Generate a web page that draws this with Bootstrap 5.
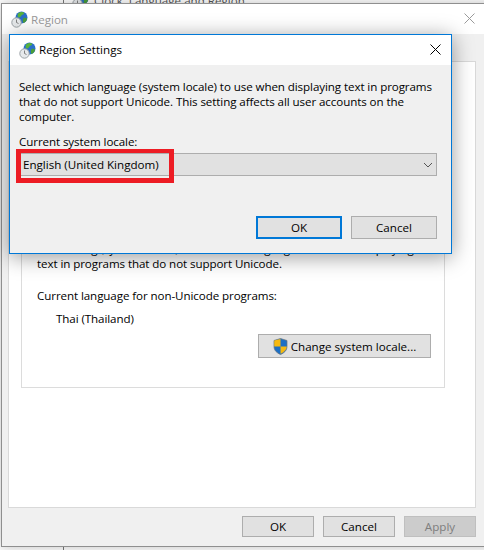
<!DOCTYPE html>
<html lang="en">
<head>
<meta charset="utf-8">
<title>Region Settings</title>
<link href="https://cdn.jsdelivr.net/npm/bootstrap@5.3.0/dist/css/bootstrap.min.css" rel="stylesheet">
<style>
html,body{height:100%;}
body{margin:0;background:#fff;overflow:hidden;position:relative;width:484px;height:550px;font-family:"Open Sans","Noto Sans",sans-serif;font-size:11.6px;line-height:15px;color:#000;}
.win-back{position:absolute;left:63px;top:-10px;width:440px;height:570px;background:#fff;border:1px solid #7a7a7a;}
.win-back-title{padding:1px 0 0 8px;color:#555;line-height:15px;white-space:nowrap;gap:5px;}
.win-region{position:absolute;left:1px;top:3px;width:500px;height:544px;background:#f0f0f0;border:1px solid #8f8f8f;box-shadow:0 0 12px rgba(0,0,0,.25);}
.win-title{height:30px;background:#fff;padding-left:9px;gap:3px;}
.win-title-text{color:#9a9a9a;}
.tab-panel{width:468px;height:447px;margin:27px 0 0 6px;background:#fff;border:1px solid #d9d9d9;padding:0 0 0 12px;}
.group-box{width:424px;height:326px;border:1px solid #dcdcdc;border-top:0;margin-top:0;padding:179px 13px 0 15px;letter-spacing:-.09px;}
.back-current{margin-top:17px;}
.back-thai{margin:8px 0 0 19px;}
.footer-row{width:468px;margin:8px 0 0 6px;gap:9px;}
.win-btn{border-radius:0;background:#e1e1e1;border:1px solid #adadad;color:#000;font-size:11.6px;line-height:15px;padding:0;height:21px;}
.win-btn:hover{background:#e1e1e1;color:#000;border-color:#adadad;}
.footer-btn{width:72px;}
.footer-first{margin-left:234px;}
.win-btn-off,.win-btn-off:disabled{background:#cccccc;border-color:#bfbfbf;color:#7d7d7d;opacity:1;}
.locale-btn{width:173px;height:24px;margin:8px 0 0 221px;gap:3px;white-space:nowrap;letter-spacing:0;}
.dlg{position:absolute;left:9px;top:34px;width:443px;height:220px;background:#f0f0f0;border:1px solid #0078d7;box-shadow:0 3px 20px rgba(0,0,0,.4);}
.dlg-title{height:30px;background:#fff;padding:0 10px 0 9px;gap:3px;}
.dlg-title-text{margin-top:-1px;}
.dlg-body{padding:14px 14px 0 9px;}
.dlg-msg{margin:0;letter-spacing:-.09px;white-space:nowrap;}
.dlg-label{display:block;margin:10px 0 0;letter-spacing:-.09px;}
.locale-select{border-radius:0;background-color:#e1e1e1;border:1px solid #adadad;color:#000;font-size:11.6px;line-height:15px;height:23px;padding:0 20px 0 3px;margin-top:4px;width:418px;background-image:url("data:image/svg+xml,%3csvg xmlns='http://www.w3.org/2000/svg' viewBox='0 0 10 6'%3e%3cpath d='M1 1l4 4 4-4' fill='none' stroke='%23555' stroke-width='1'/%3e%3c/svg%3e");background-position:right 3px center;background-size:10px 6px;box-shadow:none;}
.dlg-btns{margin-top:40px;gap:9px;justify-content:flex-end;width:418px;}
.dlg-btn{width:86px;height:23px;}
.dlg-btn-ok,.dlg-btn-ok:hover{border:2px solid #0078d7;}
.red-box{position:absolute;left:16px;top:149px;width:158px;height:34px;border-style:solid;border-color:#ed1c24;border-width:4px 5px 5px;pointer-events:none;}
.x-ico{display:block;margin-top:-2px;}
.win-x{margin-right:25px;}
</style>
</head>
<body>
<svg width="0" height="0" class="position-absolute">
  <symbol id="globe-clock" viewBox="0 0 17 17">
    <circle cx="10.500" cy="6.500" r="6" fill="#2a6fc9"/>
    <path d="M7 2.500c1.500-1.500 4-2 6-1 .5 1.500-1 2-2 2.500s-1 2-2.500 2.500S6 5 7 2.500z" fill="#58b23c"/>
    <path d="M12.500 7c1.500-.5 3.500 0 3.500 1-.5 2-2 3.500-3.500 4-1-1-1-3.500 0-5z" fill="#4a9d38"/>
    <circle cx="5.500" cy="11.500" r="4.700" fill="#e6e9eb" stroke="#9aa2a6"/>
    <path d="M5.500 8.500v3l2 1" fill="none" stroke="#666" stroke-width=".8"/>
  </symbol>
</svg>

<div class="win-back"><div class="win-back-title d-flex align-items-center"><svg width="17" height="17"><use href="#globe-clock"/></svg><span>Clock, Language and Region</span></div></div>

<div class="win-region">
  <div class="win-title d-flex align-items-center">
    <svg width="17" height="17"><use href="#globe-clock"/></svg>
    <span class="win-title-text">Region</span>
    <svg class="x-ico ms-auto win-x" width="11" height="11" viewBox="0 0 11 11"><path d="M.5.5l10 10M10.500.5l-10 10" stroke="#9a9a9a" fill="none"/></svg>
  </div>
  <div class="tab-panel">
    <div class="group-box">
      <div>This setting (system locale) controls the language used when displaying<br>text in programs that do not support Unicode.</div>
      <div class="back-current">Current language for non-Unicode programs:</div>
      <div class="back-thai">Thai (Thailand)</div>
      <button type="button" class="btn win-btn locale-btn d-flex align-items-center justify-content-center">
        <svg width="15" height="17" viewBox="0 0 15 17"><path d="M7.500.5l6.500 2v6c0 4-3 6.500-6.500 8C4 15 1 12.500 1 8.500v-6z" fill="#1d6fc4" stroke="#6d7378" stroke-width=".7"/><path d="M7.500 1v7.500H1.200v-6zM7.500 8.500h6.300c-.3 3.500-3 5.700-6.300 7.300z" fill="#f7b90f"/></svg>
        <span>Change system locale...</span>
      </button>
    </div>
  </div>
  <div class="footer-row d-flex">
    <button type="button" class="btn win-btn footer-btn footer-first">OK</button>
    <button type="button" class="btn win-btn footer-btn">Cancel</button>
    <button type="button" class="btn win-btn footer-btn win-btn-off" disabled>Apply</button>
  </div>
</div>

<div class="dlg">
  <div class="dlg-title d-flex align-items-center">
    <svg width="17" height="17"><use href="#globe-clock"/></svg>
    <span class="dlg-title-text">Region Settings</span>
    <svg class="x-ico ms-auto" width="11" height="11" viewBox="0 0 11 11"><path d="M.5.5l10 10M10.500.5l-10 10" stroke="#000" fill="none"/></svg>
  </div>
  <div class="dlg-body">
    <p class="dlg-msg">Select which language (system locale) to use when displaying text in programs<br>that do not support Unicode. This setting affects all user accounts on the<br>computer.</p>
    <label class="dlg-label" for="locale">Current system locale:</label>
    <select id="locale" class="form-select locale-select"><option>English (United Kingdom)</option></select>
    <div class="dlg-btns d-flex">
      <button type="button" class="btn win-btn dlg-btn dlg-btn-ok">OK</button>
      <button type="button" class="btn win-btn dlg-btn">Cancel</button>
    </div>
  </div>
</div>
<div class="red-box"></div>
<script src="https://cdn.jsdelivr.net/npm/bootstrap@5.3.0/dist/js/bootstrap.bundle.min.js"></script>
</body>
</html>
